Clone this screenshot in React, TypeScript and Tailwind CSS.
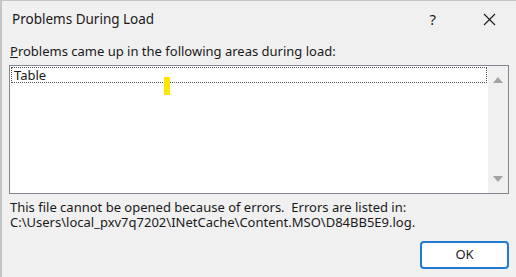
import React from "react";

function App() {
  return (
    <div
      className="w-[516px] h-[277px] bg-[#f0f0f0] border-l-2 border-t border-[#c4c4c4] flex flex-col text-[#1a1a1a]"
      style={{ fontFamily: '"Noto Sans", "Open Sans", sans-serif' }}
    >
      {/* title bar */}
      <div className="h-[37px] flex items-center pl-[10px] pr-[20px]">
        <span className="text-[13.5px] text-[#1a1a1a]">Problems During Load</span>
        <div className="ml-auto flex items-center">
          <span className="text-[15px] mr-[47px]">?</span>
          <svg width="13" height="13" viewBox="0 0 13 13" className="text-[#1a1a1a]">
            <path d="M1 1L12 12M12 1L1 12" stroke="currentColor" strokeWidth="1.1" />
          </svg>
        </div>
      </div>

      <div className="flex flex-col px-[7px]">
        <p className="text-[13px] leading-[16px] pl-px mt-[5px]">
          <span className="underline">P</span>roblems came up in the following areas during load:
        </p>

        {/* list box */}
        <div className="mt-[6px] h-[129px] w-[500px] border border-[#828790] bg-white flex">
          <div className="flex-1 flex flex-col p-px">
            <div className="h-[16px] border border-dotted border-[#555] flex items-center pl-[2px] text-[13px] leading-none">
              Table
            </div>
            <div className="h-[18px] ml-[153px] w-[6px] bg-[#ffe600] -mt-[6px]"></div>
          </div>
          <div className="w-[20px] bg-[#f0f0f0] flex flex-col items-center justify-between py-[11px]">
            <svg width="10" height="6" viewBox="0 0 10 6">
              <path d="M0 6L5 0L10 6Z" fill="#a3a3a3" />
            </svg>
            <svg width="10" height="6" viewBox="0 0 10 6">
              <path d="M0 0L5 6L10 0Z" fill="#a3a3a3" />
            </svg>
          </div>
        </div>

        <p className="text-[13px] leading-[15px] mt-[6px] pl-px">
          This file cannot be opened because of errors.&nbsp; Errors are listed in:
          <br />
          C:\Users\local_pxv7q7202\INetCache\Content.MSO\D84BB5E9.log.
        </p>

        <div className="flex justify-end mt-[11px]">
          <button
            type="button"
            className="w-[89px] h-[28px] bg-white border-2 border-[#1f7ad0] rounded-[4px] text-[13px] text-[#1a1a1a]"
          >
            OK
          </button>
        </div>
      </div>
    </div>
  );
}

export default App;
